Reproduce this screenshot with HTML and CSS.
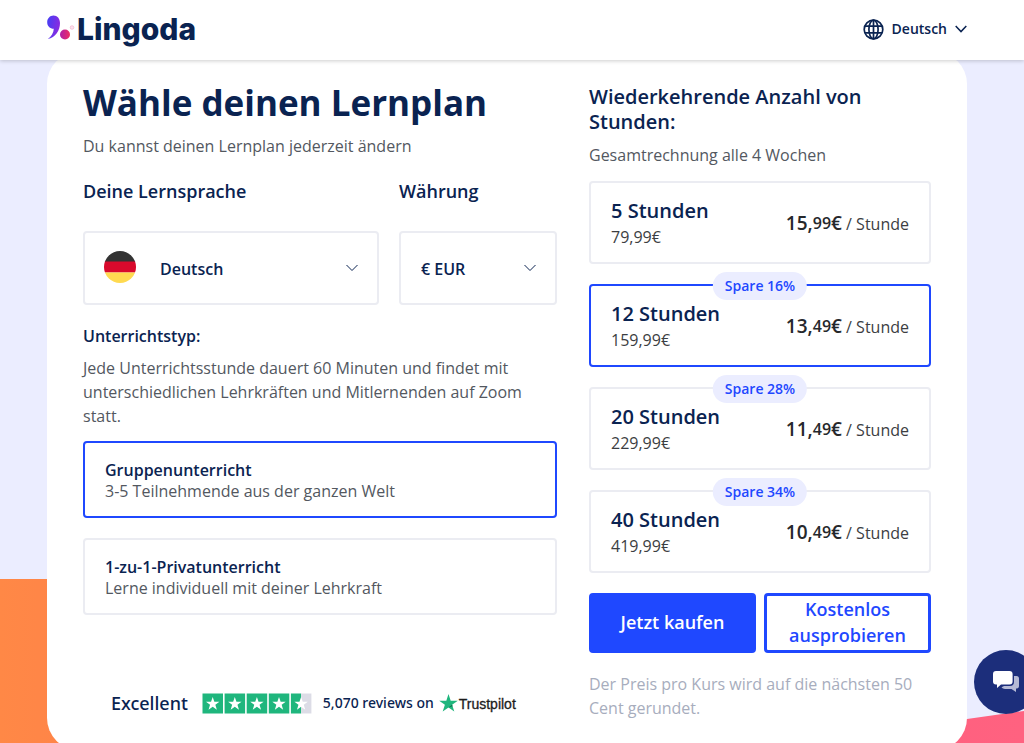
FILE: index.html
```html
<!DOCTYPE html>
<html lang="de">
<head>
<meta charset="utf-8">
<meta name="viewport" content="width=device-width, initial-scale=1">
<title>Lingoda – Wähle deinen Lernplan</title>
<link rel="stylesheet" href="styles.css">
</head>
<body>
<header class="topbar">
  <a class="logo" href="#" aria-label="Lingoda">
    <svg class="logo-mark" width="28" height="26" viewBox="0 0 28 26" aria-hidden="true">
      <defs>
        <linearGradient id="comma" x1="0" y1="0" x2="1" y2="0.3"><stop offset="0" stop-color="#4340f5"/><stop offset="1" stop-color="#8a2be0"/></linearGradient>
        <linearGradient id="dot" x1="0" y1="0" x2="1" y2="0"><stop offset="0" stop-color="#b01fa8"/><stop offset="1" stop-color="#ee2d62"/></linearGradient>
      </defs>
      <path fill="url(#comma)" d="M6.500 0.500C10.300 0.500 13 3.500 13 8C13 15.500 8.500 22.500 0.800 24C4.300 21.500 6.600 18 6.800 13.800C3 13.800 0.200 11.100 0.200 7.200C0.200 3.400 3 0.500 6.500 0.500Z"/>
      <circle cx="18" cy="19.500" r="5" fill="url(#dot)"/>
      <circle cx="25" cy="12.500" r="1.800" fill="#fbe3ee" stroke="#f3b3cf" stroke-width="0.700"/>
    </svg>
    <span class="logo-word">Lingoda</span>
  </a>
  <button class="language" type="button">
    <svg width="21" height="21" viewBox="0 0 21 21" fill="none" stroke="currentColor" stroke-width="1.700" aria-hidden="true">
      <circle cx="10.500" cy="10.500" r="9.300"/><ellipse cx="10.500" cy="10.500" rx="4.600" ry="9.300"/><path d="M10.500 1.200V19.800M2 7.200H19M2 13.800H19"/>
    </svg>
    <span>Deutsch</span>
    <svg width="12" height="8" viewBox="0 0 12 8" fill="none" stroke="currentColor" stroke-width="1.500" aria-hidden="true"><path d="M0.700 1L6 6.600L11.300 1"/></svg>
  </button>
</header>

<main class="page">
  <svg class="backdrop" viewBox="0 0 1024 164" preserveAspectRatio="none" aria-hidden="true">
    <defs><linearGradient id="warm" x1="0" y1="0" x2="1" y2="0"><stop offset="0" stop-color="#ff8846"/><stop offset="0.150" stop-color="#ff804a"/><stop offset="0.900" stop-color="#ff607f"/><stop offset="1" stop-color="#ff6280"/></linearGradient></defs>
    <path fill="url(#warm)" d="M0 0H300V164H0ZM300 164V140H967L1024 132V164Z"/>
  </svg>

  <form class="card">
    <section class="plan">
      <h1 class="title">Wähle deinen Lernplan</h1>
      <p class="text">Du kannst deinen Lernplan jederzeit ändern</p>

      <div class="selects">
        <div class="field">
          <label class="label" for="lang">Deine Lernsprache</label>
          <div class="select-box">
            <svg class="flag" width="32" height="32" viewBox="0 0 32 32" aria-hidden="true">
              <clipPath id="round"><circle cx="16" cy="16" r="16"/></clipPath>
              <g clip-path="url(#round)"><path fill="#333" d="M0 0h32v11H0z"/><path fill="#d80a2c" d="M0 10.500h32v11H0z"/><path fill="#ffda50" d="M0 21.500h32V32H0z"/></g>
            </svg>
            <select class="select select-flag" id="lang"><option>Deutsch</option></select>
            <svg class="chevron" width="12" height="8" viewBox="0 0 12 8" fill="none" stroke="currentColor" aria-hidden="true"><path d="M0.500 1L6 6.500L11.500 1"/></svg>
          </div>
        </div>
        <div class="field">
          <label class="label" for="currency">Währung</label>
          <div class="select-box">
            <select class="select" id="currency"><option>€ EUR</option></select>
            <svg class="chevron" width="12" height="8" viewBox="0 0 12 8" fill="none" stroke="currentColor" aria-hidden="true"><path d="M0.500 1L6 6.500L11.500 1"/></svg>
          </div>
        </div>
      </div>

      <h2 class="subtitle">Unterrichtstyp:</h2>
      <p class="text">Jede Unterrichtsstunde dauert 60 Minuten und findet mit unterschiedlichen Lehrkräften und Mitlernenden auf Zoom statt.</p>

      <div class="types">
        <label class="option type"><input class="radio" type="radio" name="type" checked><span class="type-name">Gruppenunterricht</span><span class="type-text">3-5 Teilnehmende aus der ganzen Welt</span></label>
        <label class="option type"><input class="radio" type="radio" name="type"><span class="type-name">1-zu-1-Privatunterricht</span><span class="type-text">Lerne individuell mit deiner Lehrkraft</span></label>
      </div>

      <div class="trust">
        <span class="trust-grade">Excellent</span>
        <svg class="stars" width="110" height="21" viewBox="0 0 110 21" role="img" aria-label="4,5 von 5 Sternen">
          <defs><path id="star" d="M0 -7L1.650 -2.200L6.700 -2.200L2.650 0.800L4.150 5.700L0 2.700L-4.150 5.700L-2.650 0.800L-6.700 -2.200L-1.650 -2.200Z"/></defs>
          <path fill="#1fb67d" d="M0.500 0.500h20.500v20H0.500zM22.600 0.500h20.500v20H22.600zM44.700 0.500h20.500v20H44.700zM66.800 0.500h20.500v20H66.800zM88.900 0.500h10.200v20H88.900z"/>
          <path fill="#dcdce6" d="M99.100 0.500h10.300v20H99.100z"/>
          <g fill="#fff"><use href="#star" x="10.700" y="11"/><use href="#star" x="32.800" y="11"/><use href="#star" x="54.900" y="11"/><use href="#star" x="77" y="11"/><use href="#star" x="99.100" y="11"/></g>
        </svg>
        <span class="trust-count">5,070 reviews on</span>
        <span class="trust-brand">
          <svg width="19" height="18" viewBox="0 0 19 18" aria-hidden="true"><path fill="#1fb67d" d="M9.500 0L11.700 6.700H18.800L13.100 10.800L15.300 17.500L9.500 13.400L3.700 17.500L5.900 10.800L0.200 6.700H7.300Z"/><path fill="#0f6e4c" d="M13.600 12.300L13.100 10.800L9.500 13.400Z"/></svg>
          <span class="trust-name">Trustpilot</span>
        </span>
      </div>
    </section>

    <section class="hours">
      <h2 class="heading">Wiederkehrende Anzahl von Stunden:</h2>
      <p class="text">Gesamtrechnung alle 4 Wochen</p>
      <div class="offers">
        <label class="option offer"><input class="radio" type="radio" name="hours"><span class="offer-info"><span class="offer-name">5 Stunden</span><span class="offer-total">79,99€</span></span><span class="offer-price"><b class="price">15,<span class="cents">99</span>€</b> / Stunde</span></label>
        <label class="option offer"><input class="radio" type="radio" name="hours" checked><span class="badge">Spare 16%</span><span class="offer-info"><span class="offer-name">12 Stunden</span><span class="offer-total">159,99€</span></span><span class="offer-price"><b class="price">13,<span class="cents">49</span>€</b> / Stunde</span></label>
        <label class="option offer"><input class="radio" type="radio" name="hours"><span class="badge">Spare 28%</span><span class="offer-info"><span class="offer-name">20 Stunden</span><span class="offer-total">229,99€</span></span><span class="offer-price"><b class="price">11,<span class="cents">49</span>€</b> / Stunde</span></label>
        <label class="option offer"><input class="radio" type="radio" name="hours"><span class="badge">Spare 34%</span><span class="offer-info"><span class="offer-name">40 Stunden</span><span class="offer-total">419,99€</span></span><span class="offer-price"><b class="price">10,<span class="cents">49</span>€</b> / Stunde</span></label>
      </div>
      <div class="actions">
        <button class="button button-solid" type="button">Jetzt kaufen</button>
        <button class="button button-line" type="button">Kostenlos ausprobieren</button>
      </div>
      <p class="text note">Der Preis pro Kurs wird auf die nächsten 50 Cent gerundet.</p>
    </section>
  </form>
</main>

<button class="chat" type="button" aria-label="Chat öffnen">
  <svg width="28" height="24" viewBox="0 0 28 24" aria-hidden="true">
    <path fill="#b5bad6" d="M22 6H24.500C26.200 6 27 7 27 8.500V16C27 17.500 26.200 18.500 24.800 18.500H24V22L19.500 18.900H13C11.500 18.900 10.500 18.500 9.500 17.300L12 16H18C20.500 16 22 14.500 22 12Z"/>
    <path fill="#fff" d="M4 1H17.500C19.600 1 20.600 2 20.600 4V11.500C20.600 13.500 19.600 14.500 17.500 14.500H9L5 18V14.500H4C2 14.500 1 13.500 1 11.500V4C1 2 2 1 4 1Z"/>
  </svg>
</button>
</body>
</html>
```
FILE: styles.css
```css
:root {
  --navy: #0a2351;
  --blue: #1f48ff;
  --line: #ebecf2;
  --grey: #53585f;
}

* { box-sizing: border-box; }

body {
  margin: 0;
  height: 100vh;
  overflow: hidden;
  display: flex;
  flex-direction: column;
  background: #ebedff;
  color: var(--grey);
  font: 16px/24px "Open Sans", "Noto Sans", sans-serif;
}

h1, h2, p { margin: 0; }
button, select { font: inherit; color: inherit; cursor: pointer; }

.topbar {
  position: relative;
  z-index: 2;
  flex: none;
  display: flex;
  align-items: center;
  justify-content: space-between;
  height: 60px;
  padding: 0 57px 2px 47px;
  background: #fff;
  box-shadow: 0 1px 4px rgb(0 0 0 / 20%);
  color: var(--navy);
}

.logo { display: flex; align-items: center; gap: 2px; color: inherit; text-decoration: none; }
.logo-mark { margin-bottom: 3px; }
.logo-word { font: 800 30px/40px Inter, sans-serif; }

.language {
  display: flex;
  align-items: center;
  gap: 8px;
  padding: 0;
  border: 0;
  background: none;
  font-size: 14px;
  font-weight: 600;
}

.page { position: relative; flex: 1; min-height: 0; padding: 0 57px 0 47px; }
.backdrop { position: absolute; left: 0; bottom: 0; width: 100%; height: 164px; }

.card {
  position: relative;
  display: grid;
  grid-template-columns: 474fr 342fr;
  gap: 32px;
  margin-top: -8px;
  padding: 31px 36px 30px;
  border-radius: 32px;
  background: #fff;
}

.plan, .hours { display: flex; flex-direction: column; }

.title { margin-bottom: 11px; color: var(--navy); font-size: 35px; line-height: 40px; font-weight: 700; }

.selects { display: grid; grid-template-columns: 296fr 158fr; gap: 20px; margin: 21px 0 19px; }
.field { display: flex; flex-direction: column; gap: 28px; }
.label { color: var(--navy); font-size: 18px; font-weight: 600; }
.select-box { position: relative; color: var(--navy); }
.select {
  appearance: none;
  width: 100%;
  height: 74px;
  padding: 2px 40px 0 20px;
  border: 2px solid var(--line);
  border-radius: 4px;
  background: #fff;
  font-weight: 600;
}
.select-flag { padding-left: 75px; }
.flag { position: absolute; left: 21px; top: 20px; }
.chevron { position: absolute; right: 21px; top: 33px; pointer-events: none; }

.subtitle { margin-bottom: 8px; color: var(--navy); font-size: 16px; line-height: 24px; font-weight: 600; }

.option { position: relative; border: 2px solid var(--line); border-radius: 4px; background: #fff; cursor: pointer; }
.option:has(.radio:checked) { border-color: var(--blue); }
.radio { position: absolute; opacity: 0; pointer-events: none; }

.types { display: flex; flex-direction: column; gap: 20px; margin-top: 13px; }
.type { display: flex; flex-direction: column; padding: 17px 20px 14px; line-height: 21px; }
.type-name { color: var(--navy); font-weight: 600; }

.trust { display: flex; align-items: center; margin: auto 0 5px 28px; color: var(--navy); font-family: "Noto Sans", "Open Sans", sans-serif; font-weight: 500; }
.trust-grade { font-size: 18px; }
.stars { margin: 0 11px 0 14px; }
.trust-count { font-size: 14px; }
.trust-brand { display: flex; align-items: center; gap: 1px; margin-left: 5px; }
.trust-name { padding-top: 2px; color: #1c1c1c; font: 14px/22px "Liberation Sans", sans-serif; -webkit-text-stroke: 0.3px #1c1c1c; }

.heading { margin: 1px 0 9px; color: var(--navy); font-size: 20px; line-height: 25px; font-weight: 600; }
.offers { display: grid; gap: 20px; margin: 14px 0 20px; }
.offer { display: flex; align-items: center; justify-content: space-between; min-height: 83px; padding: 2px 20px 0; }
.offer-info { display: flex; flex-direction: column; line-height: 26px; }
.offer-name { color: var(--navy); font-size: 20px; font-weight: 600; }
.offer-total, .offer-price { color: #3c3e42; }
.price { color: #26282c; font-size: 19px; font-weight: 600; }
.cents { font-size: 16px; vertical-align: 1px; }
.badge {
  position: absolute;
  left: 50%;
  top: -14px;
  transform: translateX(-50%);
  padding: 0 12px;
  border-radius: 14px;
  background: #ebedff;
  color: var(--blue);
  font-size: 14px;
  line-height: 28px;
  font-weight: 600;
  white-space: nowrap;
}

.actions { display: grid; grid-template-columns: 1fr 1fr; gap: 8px; }
.button { min-height: 59px; padding: 0 16px 2px; border: 3px solid var(--blue); border-radius: 4px; font-size: 18px; line-height: 26px; font-weight: 600; }
.button-solid { background: var(--blue); color: #fff; }
.button-line { background: #fff; color: var(--blue); }
.note { margin-top: 19px; color: #a7adbd; }

.chat {
  position: fixed;
  right: -14px;
  bottom: 29px;
  z-index: 3;
  display: flex;
  align-items: center;
  justify-content: center;
  width: 64px;
  height: 64px;
  padding: 0;
  border: 0;
  border-radius: 50%;
  background: #1c2e7b;
}
```
